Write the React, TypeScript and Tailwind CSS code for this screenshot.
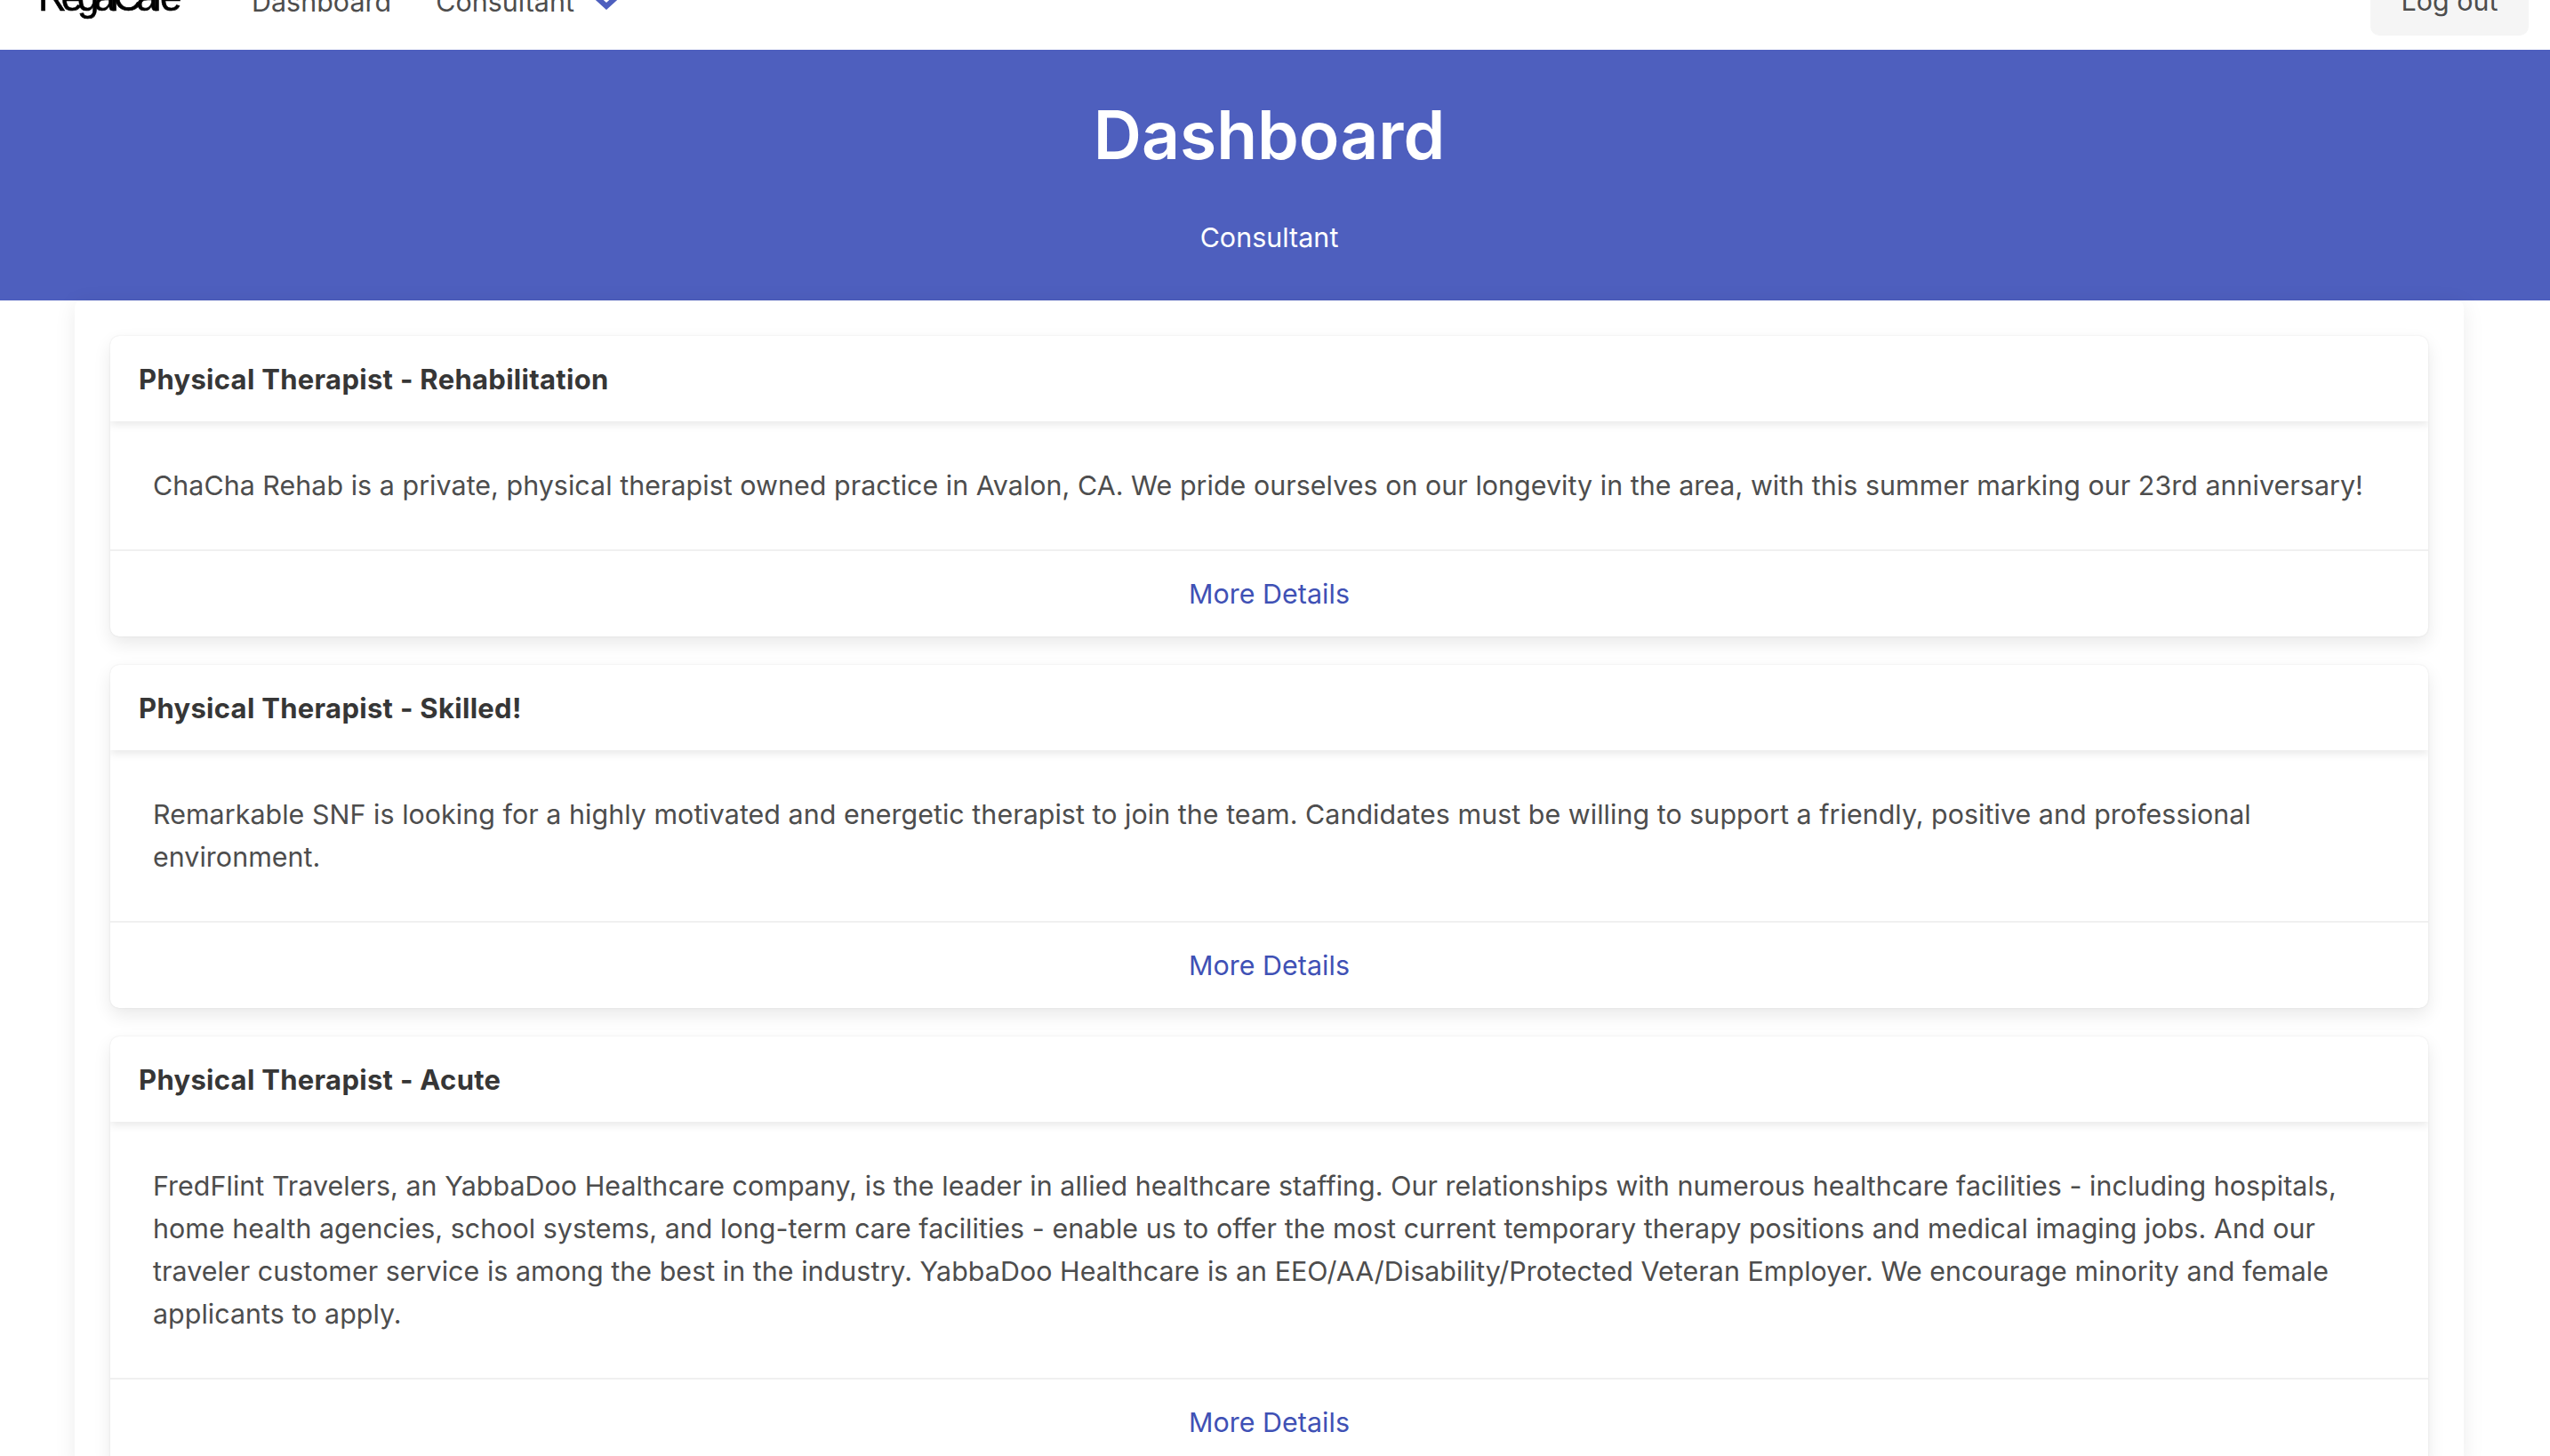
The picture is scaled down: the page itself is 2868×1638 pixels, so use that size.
const cards = [
  {
    title: "Physical Therapist - Rehabilitation",
    body: "ChaCha Rehab is a private, physical therapist owned practice in Avalon, CA. We pride ourselves on our longevity in the area, with this summer marking our 23rd anniversary!",
  },
  {
    title: "Physical Therapist - Skilled!",
    body: "Remarkable SNF is looking for a highly motivated and energetic therapist to join the team. Candidates must be willing to support a friendly, positive and professional environment.",
  },
  {
    title: "Physical Therapist - Acute",
    body: "FredFlint Travelers, an YabbaDoo Healthcare company, is the leader in allied healthcare staffing. Our relationships with numerous healthcare facilities - including hospitals, home health agencies, school systems, and long-term care facilities - enable us to offer the most current temporary therapy positions and medical imaging jobs. And our traveler customer service is among the best in the industry. YabbaDoo Healthcare is an EEO/AA/Disability/Protected Veteran Employer. We encourage minority and female applicants to apply.",
  },
];

export default function App() {
  return (
    <div className="h-[1638px] overflow-hidden bg-white font-['Inter',sans-serif] text-[30.4px] leading-[48px] tracking-[0.05px] text-[#4d4d4d]">
      <nav className="flex h-[56px] items-end overflow-hidden bg-white pr-[24px] pl-[43px]">
        <div className="flex w-full items-end">
          <span className="mb-[35px] w-[240px] font-['Liberation_Sans',sans-serif] text-[44px] leading-[48px] tracking-[-6.1px] text-black blur-[0.5px] [-webkit-text-stroke:0.6px_black]">RegalCare</span>
          <span className="mr-[50px] mb-[30px]">Dashboard</span>
          <span className="mb-[30px]">Consultant</span>
          <svg className="mb-[45px] ml-[22px] h-[16px] w-[28px]" viewBox="0 0 28 16" fill="none">
            <path d="M3 2l11 10L25 2" stroke="#4e5fbe" strokeWidth="6" />
          </svg>
          <div className="mb-[16px] ml-auto flex h-[78px] w-[178px] items-center justify-center rounded-[10px] bg-[#f5f5f5]">Log out</div>
        </div>
      </nav>
      <header className="flex h-[282px] flex-col items-center bg-[#4e5fbe] pr-[13px] text-white">
        <h1 className="mt-[48px] text-[75px] leading-[96px] font-semibold tracking-normal">Dashboard</h1>
        <p className="mt-[43px]">Consultant</p>
      </header>
      <main className="mr-[97px] ml-[84px] flex flex-col gap-[32px] rounded-t-[8px] bg-white px-[40px] pt-[40px] shadow-[0_4px_24px_rgba(0,0,0,0.08)]">
        {cards.map((card) => (
          <article key={card.title} className="overflow-hidden rounded-[10px] bg-white shadow-[0_8px_20px_rgba(0,0,0,0.09),0_0_2px_rgba(0,0,0,0.1)]">
            <h2 className="h-[96px] px-[32px] pt-[25px] text-[31px] font-bold tracking-[0.3px] text-[#363636] shadow-[0_3px_10px_rgba(0,0,0,0.1)]">{card.title}</h2>
            <p className="p-[48px]">{card.body}</p>
            <div className="flex h-[98px] items-center justify-center border-t-2 border-[#f0f0f0] text-[#3f51b5]">More Details</div>
          </article>
        ))}
      </main>
    </div>
  );
}
